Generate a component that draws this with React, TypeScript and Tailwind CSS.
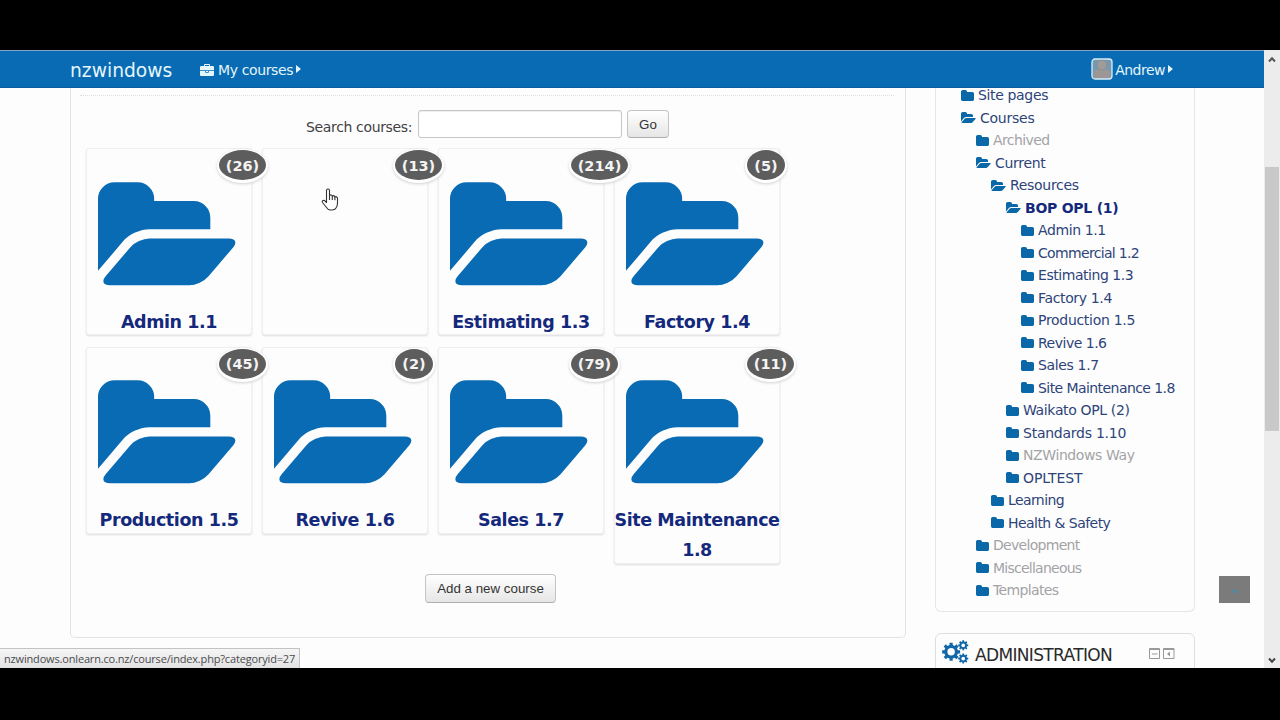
import React from "react";

const OPEN =
  "M1879 952q0 31-31 66l-336 396q-43 51-120.5 86.5t-143.5 35.5h-1088q-34 0-60.5-13t-26.5-43q0-31 31-66l336-396q43-51 120.5-86.5t143.5-35.5h1088q34 0 60.5 13t26.5 43zm-343-344v160h-832q-94 0-197 47.5t-164 119.5l-337 396-5 6q0-4-.5-12.5t-.5-12.5v-960q0-92 66-158t158-66h320q92 0 158 66t66 158v32h544q92 0 158 66t66 158z";
const CLOSED =
  "M1728 608v704q0 92-66 158t-158 66h-1216q-92 0-158-66t-66-158v-960q0-92 66-158t158-66h320q92 0 158 66t66 158v32h672q92 0 158 66t66 158z";
const BRIEFCASE =
  "M640 256h512v-128h-512v128zm1152 640v480q0 66-47 113t-113 47h-1472q-66 0-113-47t-47-113v-480h672v160q0 26 19 45t45 19h320q26 0 45-19t19-45v-160h672zm-768 0v128h-256v-128h256zm768-480v384h-1792v-384q0-66 47-113t113-47h352v-160q0-40 28-68t68-28h576q40 0 68 28t28 68v160h352q66 0 113 47t47 113z";

function gear(cx: number, cy: number, r: number, hole: number) {
  const pts: string[] = [];
  for (let i = 0; i < 8; i++) {
    const a = (i * Math.PI) / 4;
    const corners: [number, number][] = [
      [-0.23, r * 0.76],
      [-0.18, r],
      [0.18, r],
      [0.23, r * 0.76],
    ];
    for (const [d, rad] of corners) {
      pts.push(`${(cx + rad * Math.cos(a + d)).toFixed(2)} ${(cy + rad * Math.sin(a + d)).toFixed(2)}`);
    }
  }
  return `M${pts.join("L")}ZM${cx - hole} ${cy}a${hole} ${hole} 0 1 0 ${2 * hole} 0a${hole} ${hole} 0 1 0 ${-2 * hole} 0Z`;
}

const courses = [
  { name: "Admin 1.1", count: "(26)", badge: "w-[47px]" },
  { name: "", count: "(13)", badge: "w-[47px]" },
  { name: "Estimating 1.3", count: "(214)", badge: "w-[57px]" },
  { name: "Factory 1.4", count: "(5)", badge: "w-[38px]" },
  { name: "Production 1.5", count: "(45)", badge: "w-[47px]" },
  { name: "Revive 1.6", count: "(2)", badge: "w-[38px]" },
  { name: "Sales 1.7", count: "(79)", badge: "w-[47px]" },
  { name: "Site\u00a0Maintenance 1.8", count: "(11)", badge: "w-[47px]" },
];

type Node = { t: string; d: number; k: string; open?: boolean; dim?: boolean; bold?: boolean };
const tree: Node[] = [
  { t: "Site pages", d: 0, k: "tracking-[-0.35px]" },
  { t: "Courses", d: 0, k: "tracking-[-0.25px]", open: true },
  { t: "Archived", d: 1, k: "tracking-[-0.6px]", dim: true },
  { t: "Current", d: 1, k: "tracking-[-0.3px]", open: true },
  { t: "Resources", d: 2, k: "tracking-[-0.3px]", open: true },
  { t: "BOP OPL (1)", d: 3, k: "tracking-[-0.25px]", open: true, bold: true },
  { t: "Admin 1.1", d: 4, k: "tracking-[-0.4px]" },
  { t: "Commercial 1.2", d: 4, k: "tracking-[-0.67px]" },
  { t: "Estimating 1.3", d: 4, k: "tracking-[-0.45px]" },
  { t: "Factory 1.4", d: 4, k: "tracking-[-0.35px]" },
  { t: "Production 1.5", d: 4, k: "tracking-[-0.3px]" },
  { t: "Revive 1.6", d: 4, k: "tracking-[-0.5px]" },
  { t: "Sales 1.7", d: 4, k: "tracking-[-0.35px]" },
  { t: "Site Maintenance 1.8", d: 4, k: "tracking-[-0.57px]" },
  { t: "Waikato OPL (2)", d: 3, k: "tracking-[-0.35px]" },
  { t: "Standards 1.10", d: 3, k: "tracking-[-0.25px]" },
  { t: "NZWindows Way", d: 3, k: "tracking-[-0.4px]", dim: true },
  { t: "OPLTEST", d: 3, k: "tracking-[-0.1px]" },
  { t: "Learning", d: 2, k: "tracking-[-0.6px]" },
  { t: "Health & Safety", d: 2, k: "tracking-[-0.55px]" },
  { t: "Development", d: 1, k: "tracking-[-0.7px]", dim: true },
  { t: "Miscellaneous", d: 1, k: "tracking-[-0.75px]", dim: true },
  { t: "Templates", d: 1, k: "tracking-[-0.65px]", dim: true },
];
const indent = ["pl-[25px]", "pl-[40px]", "pl-[55px]", "pl-[70px]", "pl-[85px]"];

function Caret() {
  return (
    <svg className="ml-[3px] h-[8px] w-[5px]" viewBox="0 0 5 8" fill="currentColor">
      <path d="M0 0L5 4L0 8Z" />
    </svg>
  );
}

function Header() {
  return (
    <header className="flex h-[38px] shrink-0 items-center border-t border-b border-t-[#7fa6c6] border-b-[#0a5c9b] bg-[#086bb3] pl-[70px] text-[#e4f5fb]">
      <span className="mt-[5px] w-[130px] text-[18.700px] leading-none whitespace-nowrap">nzwindows</span>
      <svg className="mt-[3px] h-[14px] w-[14px]" viewBox="0 0 1792 1792" fill="currentColor">
        <path d={BRIEFCASE} />
      </svg>
      <span className="mt-[3px] ml-[4px] text-[14px] tracking-[-0.37px] whitespace-nowrap">My courses</span>
      <Caret />
      <div className="mr-[91px] ml-auto flex items-center">
        <svg className="h-[22px] w-[22px]" viewBox="0 0 22 22">
          <rect x="1" y="1" width="20" height="20" rx="3" fill="#7799b0" stroke="#d9edf7" strokeWidth="1.3" />
          <path d="M2.500 20v-4q0-4.500 4.500-4.500h8q4.500 0 4.500 4.500v4z" fill="#9a9796" />
          <circle cx="11" cy="7" r="4.800" fill="#a09c9a" stroke="#858b90" strokeWidth=".6" />
        </svg>
        <span className="mt-[2px] ml-[2px] text-[14px] tracking-[-0.5px] whitespace-nowrap">Andrew</span>
        <Caret />
      </div>
    </header>
  );
}

function CourseCard({ name, count, badge }: { name: string; count: string; badge: string }) {
  return (
    <div className="relative flex min-h-[187px] w-[166px] flex-col items-center rounded-[3px] border border-[#f0f0f2] bg-[#fdfdfe] shadow-[0_1px_2px_#dcdcde]">
      {name && (
        <>
          <svg className="mt-[23.500px] ml-[11px] h-[131px] w-[140.400px] shrink-0 self-start" viewBox="0 0 1920 1792" fill="#086bb3">
            <path d={OPEN} />
          </svg>
          <div className="mt-[3px] -mb-[2.500px] w-[176px] text-center text-[17.500px] leading-[30px] font-bold tracking-[-0.42px] text-[#14297c]">
            {name}
          </div>
        </>
      )}
      <div
        className={`absolute top-[1px] left-[132px] z-10 flex h-[30px] items-center justify-center rounded-[50%] bg-[#5d5d5d] pt-[3px] text-[14.500px] font-bold text-[#f4f4f4] shadow-[0_1px_0_2px_#fff,0_2px_3px_2px_#d0d0d0] ${badge}`}
      >
        {count}
      </div>
    </div>
  );
}

function Tree() {
  return (
    <section className="h-[524px] shrink-0 rounded-b-[6px] border border-t-0 border-[#e6e6e9] bg-[#fdfdfe]">
      <ul className="-mt-[3.500px]">
        {tree.map((n) => (
          <li key={n.t + n.d} className={`flex h-[22.500px] items-center whitespace-nowrap ${indent[n.d]}`}>
            <svg
              className={n.open ? "h-[14px] w-[15px] shrink-0" : "h-[14px] w-[13px] shrink-0"}
              viewBox={n.open ? "0 0 1920 1792" : "64 0 1664 1792"}
              fill="#0a68a8"
            >
              <path d={n.open ? OPEN : CLOSED} />
            </svg>
            <span
              className={`ml-[4px] text-[14px] ${n.k} ${
                n.bold ? "font-bold text-[#14297c]" : n.dim ? "text-[#a3a3a5]" : "text-[#2d4478]"
              }`}
            >
              {n.t}
            </span>
          </li>
        ))}
      </ul>
    </section>
  );
}

function Administration() {
  return (
    <section className="mt-[21px] flex h-[60px] shrink-0 rounded-t-[6px] border border-[#dedee1] bg-[#fdfdfe] pl-[6px]">
      <svg className="mt-[5px] h-[26px] w-[27px]" viewBox="0 0 29 26" fill="#1167a8" fillRule="evenodd">
        <path d={gear(9.8, 12.8, 9.8, 4)} />
        <path d={gear(22.8, 5.8, 5.5, 2)} />
        <path d={gear(22.8, 20, 5.5, 2)} />
      </svg>
      <h2 className="mt-[8px] ml-[6px] text-[17px] leading-[26px] tracking-[-0.65px] whitespace-nowrap text-[#292929]">ADMINISTRATION</h2>
      <svg className="mt-[14px] mr-[19px] ml-auto h-[12px] w-[26px]" viewBox="0 0 26 12" fill="none" stroke="#999" strokeWidth="1">
        <path d="M.5 .5h10v10h-10zM0 1.500h11M3 6h5.500M14.500 .5h10.500v10h-10.500zM14 1.500h11" />
        <path d="M21 3.500L18 6l3 2.500z" fill="#999" stroke="none" />
      </svg>
    </section>
  );
}

export default function App() {
  return (
    <div className="flex h-[720px] w-[1280px] flex-col overflow-hidden bg-black pt-[50px] pb-[52px] font-['DejaVu_Sans',sans-serif]">
      <div className="relative flex h-[618px] bg-[#fdfdfe]">
        <div className="flex w-[1264px] flex-col overflow-hidden">
          <Header />
          <div className="flex min-h-0 flex-1 pl-[70px]">
            <main className="flex h-[550px] w-[836px] flex-col rounded-b-[5px] border border-t-0 border-[#e3e3e6] px-[15px]">
              <div className="mt-[7px] -mr-[4px] ml-[-6px] shrink-0 border-t border-dotted border-[#dedee0]" />
              <div className="mt-[14px] flex h-[28px] shrink-0 items-center pl-[220px]">
                <label className="mt-[7px] w-[112px] text-[14px] tracking-[-0.35px] whitespace-nowrap text-[#414141]">Search courses:</label>
                <input className="h-[28px] w-[204px] rounded-[3px] border border-[#c6c6c8] bg-white shadow-[inset_0_1px_1px_#eee]" />
                <button className="ml-[5px] h-[28px] w-[42px] rounded-[4px] border border-[#c4c4c5] border-b-[#aeaeae] bg-linear-to-b from-white to-[#e6e6e6] pt-[2px] font-['Liberation_Sans',sans-serif] text-[13.330px] text-[#333]">
                  Go
                </button>
              </div>
              <div className="mt-[10px] grid shrink-0 grid-cols-[repeat(4,166px)] items-start gap-x-[10px] gap-y-[11.500px]">
                {courses.map((c, i) => (
                  <CourseCard key={i} {...c} />
                ))}
              </div>
              <button className="mt-[10px] ml-[339px] h-[29px] w-[131px] shrink-0 rounded-[4px] border border-[#c4c4c5] border-b-[#aeaeae] bg-linear-to-b from-white to-[#e6e6e6] pt-[2px] font-['Liberation_Sans',sans-serif] text-[13.330px] whitespace-nowrap text-[#333]">
                Add a new course
              </button>
            </main>
            <aside className="ml-[29px] flex w-[260px] flex-col overflow-hidden">
              <Tree />
              <Administration />
            </aside>
          </div>
        </div>
        <div className="flex w-[16px] flex-col items-center bg-[#ececed]">
          <svg className="mt-[6px] h-[7px] w-[8px]" viewBox="0 0 8 7" fill="none" stroke="#555" strokeWidth="2">
            <path d="M1 5.500L4 2.300L7 5.500" />
          </svg>
          <div className="mt-[104px] h-[264px] w-[14px] bg-[#c9c9ca]" />
          <svg className="mt-auto mb-[4px] h-[7px] w-[8px]" viewBox="0 0 8 7" fill="none" stroke="#444" strokeWidth="2">
            <path d="M1 1.500L4 4.700L7 1.500" />
          </svg>
        </div>
        <div className="absolute top-[526px] left-[1219px] flex h-[27px] w-[31px] items-center justify-center bg-[#7b7b7b]">
          <svg className="mt-[4px] h-[5px] w-[7px]" viewBox="0 0 7 5" fill="none" stroke="#3f93ad" strokeWidth="1.200">
            <path d="M.5 4L3.500 1L6.500 4" />
          </svg>
        </div>
        <svg className="absolute top-[138px] left-[321px] h-[23px] w-[18px]" viewBox="0 0 18 23" fill="#fff" stroke="#333" strokeWidth="1.100" strokeLinejoin="round">
          <path d="M5.500 13V2.500Q5.500 1 7 1T8.500 2.500V8Q9 6.500 10.300 7T11.300 8.500Q12 7.200 13 7.700T13.900 9.200Q14.800 8.200 15.700 9T16.500 10.500V15Q16.500 18 15 20Q14 22 11 22H9.500Q7 22 5.500 19.500L1.500 14.500Q.8 13 2 12.500T4 13L5.500 14.500Z" />
          <path d="M8.500 8v4M11.300 8.500v3.500M13.900 9.200v3" fill="none" />
        </svg>
        <div className="absolute bottom-0 left-0 flex h-[20px] w-[300px] items-center border-t border-r border-[#c3c3c3] bg-linear-to-b from-[#f6f6f7] to-[#e2e2e3] pt-px pl-[4px] font-['Open_Sans',sans-serif] text-[11px] tracking-[-0.170px] whitespace-nowrap text-[#4b4b4b]">
          nzwindows.onlearn.co.nz/course/index.php?categoryid=27
        </div>
      </div>
    </div>
  );
}
